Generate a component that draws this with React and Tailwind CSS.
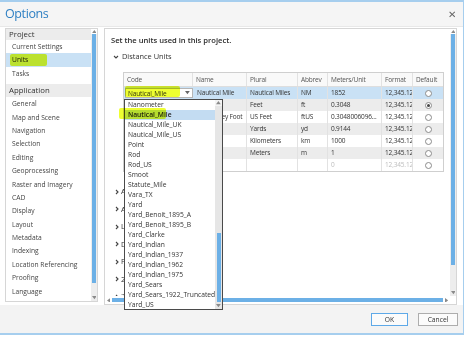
import React from 'react';

/* ---------- Options dialog: Units page with the Code dropdown open ---------- */

const FONT = "font-['Open_Sans','Noto_Sans',sans-serif]";

const projectItems = ['Current Settings', 'Units', 'Tasks'];
const appItems = [
  'General',
  'Map and Scene',
  'Navigation',
  'Selection',
  'Editing',
  'Geoprocessing',
  'Raster and Imagery',
  'CAD',
  'Display',
  'Layout',
  'Metadata',
  'Indexing',
  'Location Referencing',
  'Proofing',
  'Language',
  'Customize the Ribbon',
];

const unitRows = [
  { name: 'Foot', plural: 'Feet', abbrev: 'ft', mpu: '0.3048', fmt: '12,345.12', def: true },
  { name: 'US Survey Foot', plural: 'US Feet', abbrev: 'ftUS', mpu: '0.3048006096...', fmt: '12,345.12' },
  { name: 'Yard', plural: 'Yards', abbrev: 'yd', mpu: '0.9144', fmt: '12,345.12' },
  { name: 'Km', plural: 'Kilometers', abbrev: 'km', mpu: '1000', fmt: '12,345.12' },
  { name: 'Meter', plural: 'Meters', abbrev: 'm', mpu: '1', fmt: '12,345.12' },
  { name: '', plural: '', abbrev: '', mpu: '0', fmt: '12,345.12', empty: true },
];

const dropItems = [
  'Nanometer',
  'Nautical_Mile',
  'Nautical_Mile_UK',
  'Nautical_Mile_US',
  'Point',
  'Rod',
  'Rod_US',
  'Smoot',
  'Statute_Mile',
  'Vara_TX',
  'Yard',
  'Yard_Benoit_1895_A',
  'Yard_Benoit_1895_B',
  'Yard_Clarke',
  'Yard_Indian',
  'Yard_Indian_1937',
  'Yard_Indian_1962',
  'Yard_Indian_1975',
  'Yard_Sears',
  'Yard_Sears_1922_Truncated',
  'Yard_US',
];

const sections = [
  'Angular Units',
  'Area Units',
  'Location Units',
  'Direction Units',
  'Page Units',
  '2D Symbol Display Units',
  '3D Symbol Display Units',
];

const cols = 'grid grid-cols-[69px_54px_51px_30px_54px_31px_30px]';

function Tri({ dir = 'up', color = '#8a8a8a' }) {
  const pts = {
    up: '0,4 3,0 6,4',
    down: '0,0 6,0 3,4',
    left: '4,0 4,6 0,3',
    right: '0,0 0,6 4,3',
  }[dir];
  const side = dir === 'left' || dir === 'right';
  const w = side ? 4 : 6;
  const h = side ? 6 : 4;
  return (
    <svg width={w * 0.8} height={h * 0.8} viewBox={`0 0 ${w} ${h}`}>
      <polygon points={pts} fill={color} />
    </svg>
  );
}

function Chevron({ open }) {
  return (
    <svg width="6" height="6" viewBox="0 0 6 6">
      {open ? (
        <polyline points="1,2 3,4 5,2" fill="none" stroke="#444" strokeWidth="1.1" />
      ) : (
        <polyline points="2,1 4,3 2,5" fill="none" stroke="#444" strokeWidth="1.1" />
      )}
    </svg>
  );
}

function Radio({ on }) {
  return (
    <div className="w-[7px] h-[7px] rounded-full border border-[#8c8c8c] bg-white flex items-center justify-center">
      {on && <div className="w-[3px] h-[3px] rounded-full bg-[#444]" />}
    </div>
  );
}

function Cell({ children, className = '', last }) {
  return (
    <div
      className={
        'pl-[3px] overflow-hidden whitespace-nowrap ' +
        (last ? '' : 'border-r border-[#e2e2e2] ') +
        className
      }
    >
      {children}
    </div>
  );
}

function LeftPanel() {
  return (
    <div className="w-[93px] h-[274px] border border-[#d6d6d6] bg-white flex shrink-0">
      <div className="flex-1 overflow-hidden flex flex-col text-[6.7px] text-[#444]">
        <div className="h-[11px] shrink-0 bg-[#ececec] pl-[3px] text-[7.8px] leading-[11px] text-[#333]">
          Project
        </div>
        {projectItems.map((it) => (
          <div
            key={it}
            className={
              'h-[13.4px] shrink-0 pl-[6px] leading-[13.4px] ' +
              (it === 'Units' ? 'bg-[#c9e1f5] text-[#222]' : '')
            }
          >
            {it}
          </div>
        ))}
        <div className="mt-[4px] h-[13px] shrink-0 bg-[#ececec] pl-[3px] text-[7.8px] leading-[13px] text-[#333]">
          Application
        </div>
        {appItems.map((it) => (
          <div key={it} className="h-[13.4px] shrink-0 pl-[6px] leading-[13.4px]">
            {it}
          </div>
        ))}
      </div>
      <div className="w-[6px] flex flex-col items-center bg-[#ededed]">
        <div className="h-[5px] flex items-center bg-white w-full justify-center">
          <Tri dir="up" />
        </div>
        <div className="w-[4px] h-[249px] bg-[#6cb0e6]" />
        <div className="flex-1" />
        <div className="h-[6px] flex items-center">
          <Tri dir="down" />
        </div>
      </div>
    </div>
  );
}

function UnitsTable() {
  return (
    <div className="ml-[12px] mt-[10px] w-[321px] border border-[#cfcfcf] text-[6.5px] tracking-[-0.15px] text-[#333]">
      <div className={cols + ' h-[14px] leading-[14px] bg-[#f9f9f9] text-[#555] border-b border-[#dedede]'}>
        <Cell>Code</Cell>
        <Cell>Name</Cell>
        <Cell>Plural</Cell>
        <Cell>Abbrev</Cell>
        <Cell>Meters/Unit</Cell>
        <Cell>Format</Cell>
        <Cell last>Default</Cell>
      </div>
      <div className={cols + ' h-[12px] leading-[12px] bg-[#c9e1f5]'}>
        <div className="pl-[1px] py-[1px]">
          <div className="h-[10px] bg-white border border-[#b5b5b5] flex items-center justify-between pl-[2px] pr-[2px] leading-[9px]">
            <span>Nautical_Mile</span>
            <Tri dir="down" color="#666" />
          </div>
        </div>
        <Cell className="pl-[4px]">Nautical Mile</Cell>
        <Cell>Nautical Miles</Cell>
        <Cell>NM</Cell>
        <Cell>1852</Cell>
        <Cell className="pl-[2px]">12,345.12</Cell>
        <div className="flex items-center justify-center">
          <Radio />
        </div>
      </div>
      {unitRows.map((r, i) => (
        <div
          key={i}
          className={
            cols +
            ' h-[12px] leading-[12px] ' +
            (i % 2 === 0 ? 'bg-[#ececec] ' : 'bg-white ') +
            (r.empty ? 'text-[#bdbdbd]' : '')
          }
        >
          <Cell />
          <Cell className="pl-[6px]">{r.name}</Cell>
          <Cell>{r.plural}</Cell>
          <Cell>{r.abbrev}</Cell>
          <Cell>{r.mpu}</Cell>
          <Cell className="pl-[2px]">{r.fmt}</Cell>
          <div className="flex items-center justify-center">
            <Radio on={r.def} />
          </div>
        </div>
      ))}
    </div>
  );
}

function MainPanel() {
  return (
    <div className="w-[353px] h-[277px] border border-[#d6d6d6] bg-white flex flex-col">
      <div className="flex-1 flex min-h-0">
        <div className="flex-1 overflow-hidden pl-[6px] pt-[6px] text-[#333]">
          <div className="h-[10px] leading-[10px] text-[7.6px] font-semibold text-[#2b2b2b]">
            Set the units used in this project.
          </div>
          <div className="mt-[7px] h-[10px] flex items-center gap-[3px] pl-[2px] text-[7.4px] text-[#333]">
            <Chevron open />
            <span>Distance Units</span>
          </div>
          <UnitsTable />
          <div className="mt-[11px] flex flex-col">
            {sections.map((s) => (
              <div key={s} className="h-[17.5px] shrink-0 flex items-center gap-[1px] pl-[3px] text-[7.4px]">
                <Chevron />
                <span>{s}</span>
              </div>
            ))}
          </div>
        </div>
        <div className="w-[6px] flex flex-col items-center bg-[#ededed]">
          <div className="h-[5px] w-full bg-white flex items-center justify-center">
            <Tri dir="up" />
          </div>
          <div className="w-[4px] h-[231px] bg-[#6cb0e6]" />
          <div className="flex-1" />
          <div className="h-[6px] flex items-center">
            <Tri dir="down" />
          </div>
        </div>
      </div>
      <div className="h-[8px] flex items-center pl-[2px] pr-[8px]">
        <Tri dir="left" />
        <div className="ml-[2px] flex-1 h-[4px] bg-[#6cb0e6]" />
        <div className="ml-[2px]">
          <Tri dir="right" />
        </div>
      </div>
    </div>
  );
}

function Dropdown() {
  return (
    <div className="absolute left-[124px] top-[99px] w-[99px] h-[211px] border border-[#4a4a4a] bg-white flex text-[6.7px] text-[#333]">
      <div className="flex-1 flex flex-col">
        {dropItems.map((it) => (
          <div
            key={it}
            className={
              'h-[10px] shrink-0 pl-[3px] leading-[10px] whitespace-nowrap ' +
              (it === 'Nautical_Mile' ? 'bg-[#c3dcf2] font-semibold text-[#222]' : '')
            }
          >
            {it}
          </div>
        ))}
      </div>
      <div className="w-[7px] flex flex-col items-center bg-[#e6e6e6]">
        <div className="h-[6px] w-full bg-[#f4f4f4] flex items-center justify-center">
          <Tri dir="up" />
        </div>
        <div className="flex-1" />
        <div className="w-[4px] h-[69px] bg-[#6cb0e6]" />
        <div className="h-[7px] flex items-center">
          <Tri dir="down" />
        </div>
      </div>
    </div>
  );
}

export default function App() {
  return (
    <div className={FONT + ' relative w-[474px] h-[338px] bg-white overflow-hidden'}>
      <div className="w-[464px] h-[335px] border-t-2 border-b-2 border-r border-[#a6ceee] flex flex-col">
        <div className="h-[25px] shrink-0 bg-[#f5f5f5] border-b border-[#e8e8e8] flex items-center justify-between pl-[5px] pr-[7px]">
          <span className="text-[12.5px] tracking-[-0.4px] text-[#2d7fc3]">Options</span>
          <span className="text-[10px] text-[#666]">✕</span>
        </div>
        <div className="h-[278px] shrink-0 bg-white flex gap-[6px] pl-[5px] pt-[1px]">
          <LeftPanel />
          <MainPanel />
        </div>
        <div className="flex-1 bg-[#f3f3f3] flex justify-end items-start gap-[10px] pt-[8px] pr-[5px] text-[6.7px] text-[#333]">
          <button className="w-[37px] h-[13px] bg-[#fbfbfb] border border-[#5ea9e8] leading-[11px]">OK</button>
          <button className="w-[40px] h-[13px] bg-[#fbfbfb] border border-[#adadad] leading-[11px]">Cancel</button>
        </div>
      </div>

      <Dropdown />

      {/* highlighter marks */}
      <div className="absolute left-[10px] top-[54px] w-[37px] h-[12px] rounded-[2px] bg-[#ecff1a] mix-blend-multiply opacity-90" />
      <div className="absolute left-[125px] top-[86px] w-[55px] h-[11px] rounded-[2px] bg-[#ecff1a] mix-blend-multiply opacity-90" />
      <div className="absolute left-[119px] top-[108px] w-[47px] h-[11px] rounded-[2px] bg-[#ecff1a] mix-blend-multiply opacity-90" />
    </div>
  );
}
